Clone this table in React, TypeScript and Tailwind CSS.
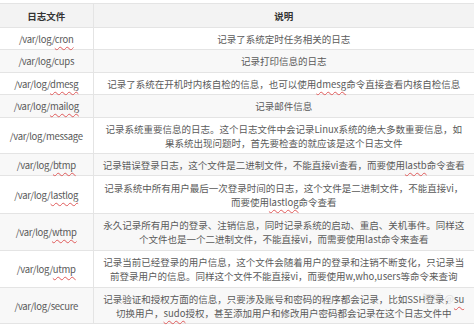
const squiggle =
  "underline decoration-wavy decoration-[#e05a5a] decoration-1 underline-offset-[3px]";

type Row = {
  file: React.ReactNode;
  lines: React.ReactNode[];
  h: string;
};

const rows: Row[] = [
  {
    file: <>/var/log/<span className={squiggle}>cron</span></>,
    lines: ["记录了系统定时任务相关的日志"],
    h: "h-[22px]",
  },
  {
    file: "/var/log/cups",
    lines: ["记录打印信息的日志"],
    h: "h-[23px]",
  },
  {
    file: <>/var/log/<span className={squiggle}>dmesg</span></>,
    lines: [
      <>记录了系统在开机时内核自检的信息，也可以使用<span className={squiggle}>dmesg</span>命令直接查看内核自检信息</>,
    ],
    h: "h-[22px]",
  },
  {
    file: <>/var/log/<span className={squiggle}>mailog</span></>,
    lines: ["记录邮件信息"],
    h: "h-[23px]",
  },
  {
    file: "/var/log/message",
    lines: [
      "记录系统重要信息的日志。这个日志文件中会记录Linux系统的绝大多数重要信息，如",
      "果系统出现问题时，首先要检查的就应该是这个日志文件",
    ],
    h: "h-[36px]",
  },
  {
    file: <>/var/log/<span className={squiggle}>btmp</span></>,
    lines: [
      <>记录错误登录日志，这个文件是二进制文件，不能直接vi查看，而要使用<span className={squiggle}>lastb</span>命令查看</>,
    ],
    h: "h-[22px]",
  },
  {
    file: <>/var/log/<span className={squiggle}>lastlog</span></>,
    lines: [
      "记录系统中所有用户最后一次登录时间的日志，这个文件是二进制文件，不能直接vi，",
      <>而要使用<span className={squiggle}>lastlog</span>命令查看</>,
    ],
    h: "h-[38px]",
  },
  {
    file: <>/var/log/<span className={squiggle}>wtmp</span></>,
    lines: [
      "永久记录所有用户的登录、注销信息，同时记录系统的启动、重启、关机事件。同样这",
      "个文件也是一个二进制文件，不能直接vi，而需要使用last命令来查看",
    ],
    h: "h-[37px]",
  },
  {
    file: <>/var/log/<span className={squiggle}>utmp</span></>,
    lines: [
      "记录当前已经登录的用户信息，这个文件会随着用户的登录和注销不断变化，只记录当",
      "前登录用户的信息。同样这个文件不能直接vi，而要使用w,who,users等命令来查询",
    ],
    h: "h-[37px]",
  },
  {
    file: "/var/log/secure",
    lines: [
      <>记录验证和授权方面的信息，只要涉及账号和密码的程序都会记录，比如SSH登录，<span className={squiggle}>su</span></>,
      <>切换用户，<span className={squiggle}>sudo</span>授权，甚至添加用户和修改用户密码都会记录在这个日志文件中</>,
    ],
    h: "h-[36px]",
  },
];

export default function App() {
  return (
    <div
      className="relative h-[327px] w-[474px] overflow-hidden bg-white pt-[3px] text-[#5a5a5a]"
      style={{ fontFamily: '"Noto Sans CJK SC", "Noto Sans", sans-serif' }}
    >
      <table className="w-full table-fixed border-collapse text-[9.5px] leading-[14px]">
        <colgroup>
          <col className="w-[93px]" />
          <col />
        </colgroup>
        <thead>
          <tr className="h-[24px] bg-[#f3f3f3]">
            <th className="border-y border-r border-[#e4e4e4] text-center text-[9.5px] font-bold text-[#333]">
              日志文件
            </th>
            <th className="border-y border-[#e4e4e4] text-center text-[9.5px] font-bold text-[#333]">
              说明
            </th>
          </tr>
        </thead>
        <tbody>
          {rows.map((row, i) => (
            <tr key={i} className={`${row.h} ${i % 2 === 1 ? "bg-[#f8f8f8]" : "bg-white"}`}>
              <td className="whitespace-nowrap border-r border-b border-[#e4e4e4] text-center text-[9.5px] tracking-[-0.3px]">
                {row.file}
              </td>
              <td className="border-b border-[#e4e4e4] px-1 text-center">
                {row.lines.map((line, j) => (
                  <div key={j} className="whitespace-nowrap">
                    {line}
                  </div>
                ))}
              </td>
            </tr>
          ))}
        </tbody>
      </table>
      <div className="pointer-events-none absolute right-[20px] top-[290px] text-[10px] text-[#d0d0d0] opacity-60">
        知乎 @
      </div>
    </div>
  );
}
